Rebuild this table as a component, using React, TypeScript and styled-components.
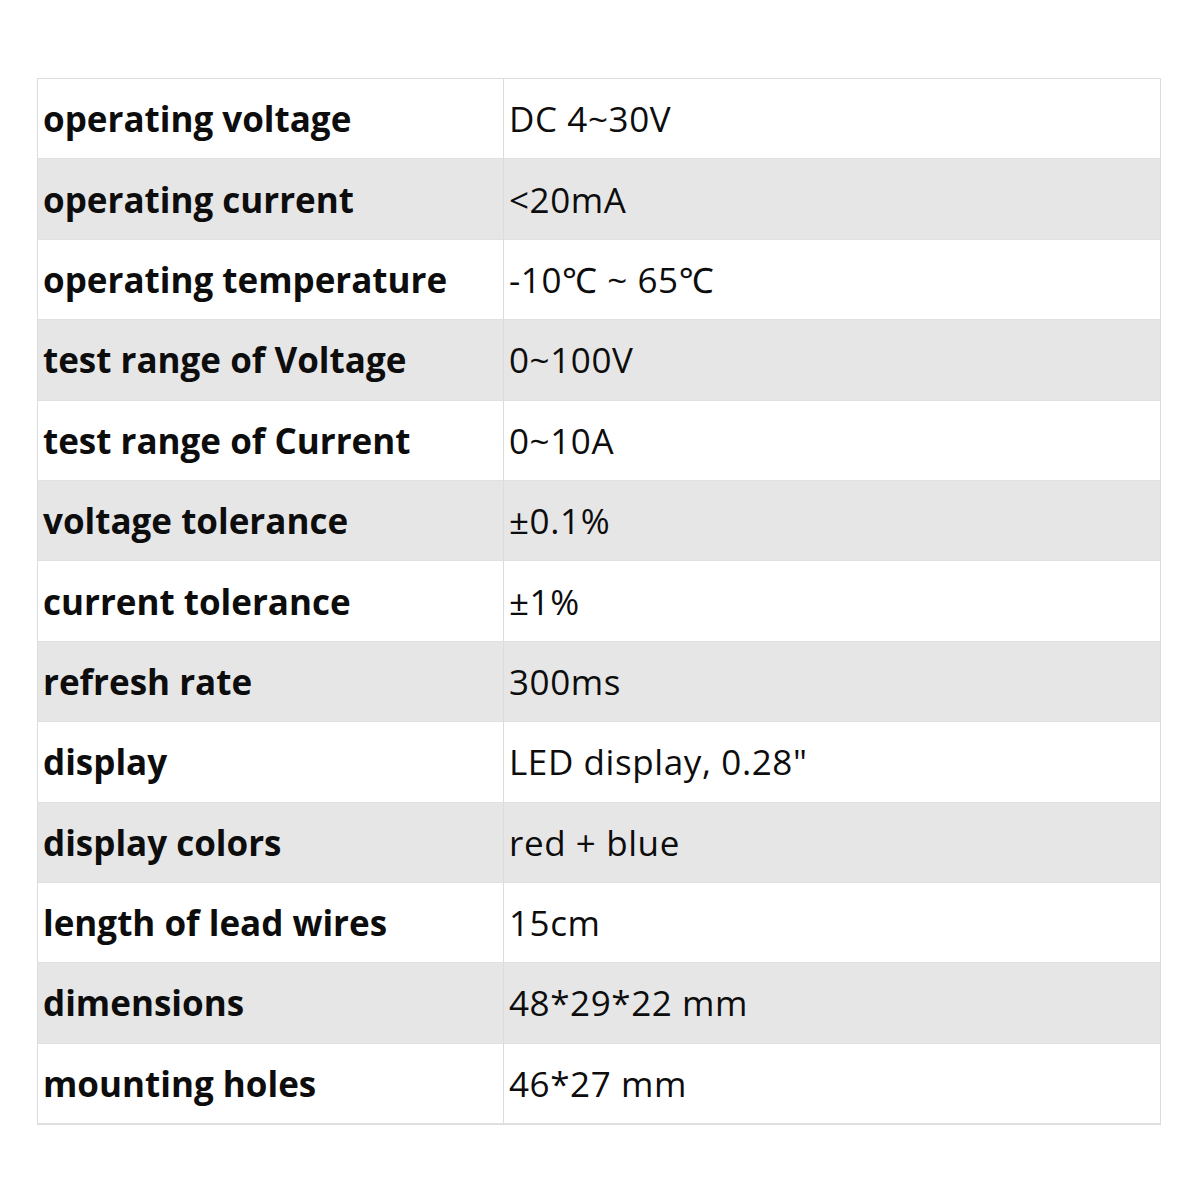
import styled, { createGlobalStyle } from "styled-components";

const GlobalStyle = createGlobalStyle`
  html, body {
    margin: 0;
    padding: 0;
    background: #ffffff;
  }
`;

const Page = styled.div`
  width: 1200px;
  height: 1200px;
  padding: 78px 0 0 37px;
  box-sizing: border-box;
  font-family: "Open Sans", "Noto Sans", sans-serif;
  color: #0d0d0d;
`;

const Table = styled.div`
  width: 1124px;
  display: grid;
  grid-template-columns: 466px 1fr;
  border: 1px solid #dcdcdc;
  box-sizing: border-box;
`;

const Cell = styled.div<{ $shade: boolean; $label?: boolean }>`
  height: 80.4px;
  display: flex;
  align-items: center;
  padding-left: ${(p) => (p.$label ? "5px" : "5px")};
  box-sizing: border-box;
  background: ${(p) => (p.$shade ? "#e6e6e6" : "#ffffff")};
  border-bottom: 1px solid #e0e0e0;
  border-right: ${(p) => (p.$label ? "1px solid #dcdcdc" : "none")};
  font-size: 35px;
  font-weight: ${(p) => (p.$label ? 700 : 400)};
  letter-spacing: ${(p) => (p.$label ? "0px" : "0.6px")};
  white-space: pre;
`;

const rows: [string, string][] = [
  ["operating voltage", "DC 4~30V"],
  ["operating current", "<20mA"],
  ["operating temperature", "-10℃ ~ 65℃"],
  ["test range of Voltage", "0~100V"],
  ["test range of Current", "0~10A"],
  ["voltage tolerance", "±0.1%"],
  ["current tolerance", "±1%"],
  ["refresh rate", "300ms"],
  ["display", 'LED display, 0.28"'],
  ["display colors", "red + blue"],
  ["length of lead wires", "15cm"],
  ["dimensions", "48*29*22 mm"],
  ["mounting holes", "46*27 mm"],
];

export default function App() {
  return (
    <Page>
      <GlobalStyle />
      <Table>
        {rows.map(([label, value], i) => [
          <Cell key={label} $shade={i % 2 === 1} $label>
            {label}
          </Cell>,
          <Cell key={label + "-v"} $shade={i % 2 === 1}>
            {value}
          </Cell>,
        ])}
      </Table>
    </Page>
  );
}
